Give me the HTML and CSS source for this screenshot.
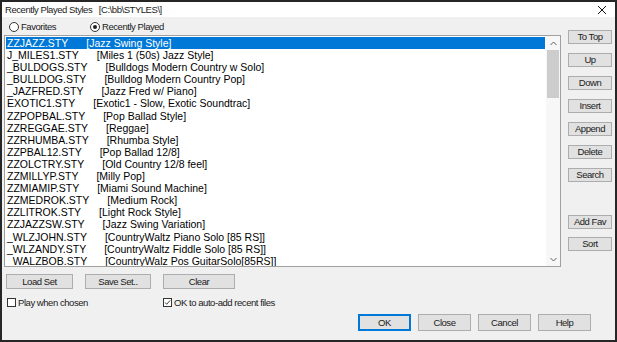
FILE: index.html
```html
<!DOCTYPE html>
<html lang="en">
<head>
  <meta charset="UTF-8">
  <title>Recently Played Styles</title>
  <link rel="stylesheet" href="styles.css">
</head>
<body>
  <div class="window">
    <div class="titlebar">
      <span class="title">Recently Played Styles&nbsp;&nbsp;&nbsp;[C:\bb\STYLES\]</span>
      <svg class="close" width="10" height="10" viewBox="0 0 10 10">
        <path d="M1 1L9 9M9 1L1 9" stroke="#111" stroke-width="1" fill="none"/>
      </svg>
    </div>

    <div class="content">
      <div class="top">
        <div class="left">
          <div class="radios">
            <label class="radio-label"><span class="radio"></span>Favorites</label>
            <label class="radio-label"><span class="radio checked"></span>Recently Played</label>
          </div>

          <div class="listbox">
            <ul class="items">
              <li class="selected"><span>ZZJAZZ.STY</span><span class="desc">[Jazz Swing Style]</span></li>
              <li><span>J_MILES1.STY</span><span class="desc">[Miles 1 (50s) Jazz Style]</span></li>
              <li><span>_BULDOGS.STY</span><span class="desc">[Bulldogs Modern Country w Solo]</span></li>
              <li><span>_BULLDOG.STY</span><span class="desc">[Bulldog Modern Country Pop]</span></li>
              <li><span>_JAZFRED.STY</span><span class="desc">[Jazz Fred w/ Piano]</span></li>
              <li><span>EXOTIC1.STY</span><span class="desc">[Exotic1 - Slow, Exotic Soundtrac]</span></li>
              <li><span>ZZPOPBAL.STY</span><span class="desc">[Pop Ballad Style]</span></li>
              <li><span>ZZREGGAE.STY</span><span class="desc">[Reggae]</span></li>
              <li><span>ZZRHUMBA.STY</span><span class="desc">[Rhumba Style]</span></li>
              <li><span>ZZPBAL12.STY</span><span class="desc">[Pop Ballad 12/8]</span></li>
              <li><span>ZZOLCTRY.STY</span><span class="desc">[Old Country 12/8 feel]</span></li>
              <li><span>ZZMILLYP.STY</span><span class="desc">[Milly Pop]</span></li>
              <li><span>ZZMIAMIP.STY</span><span class="desc">[Miami Sound Machine]</span></li>
              <li><span>ZZMEDROK.STY</span><span class="desc">[Medium Rock]</span></li>
              <li><span>ZZLITROK.STY</span><span class="desc">[Light Rock Style]</span></li>
              <li><span>ZZJAZZSW.STY</span><span class="desc">[Jazz Swing Variation]</span></li>
              <li><span>_WLZJOHN.STY</span><span class="desc">[CountryWaltz Piano Solo [85 RS]]</span></li>
              <li><span>_WLZANDY.STY</span><span class="desc">[CountryWaltz Fiddle Solo [85 RS]]</span></li>
              <li><span>_WALZBOB.STY</span><span class="desc">[CountryWalz Pos GuitarSolo[85RS]]</span></li>
            </ul>
            <div class="scrollbar">
              <span class="arrow">
                <svg width="7" height="5" viewBox="0 0 7 5"><path d="M0.5 4L3.5 1L6.5 4" stroke="#606060" fill="none"/></svg>
              </span>
              <span class="thumb"></span>
              <span class="track"></span>
              <span class="arrow">
                <svg width="7" height="5" viewBox="0 0 7 5"><path d="M0.5 1L3.5 4L6.5 1" stroke="#606060" fill="none"/></svg>
              </span>
            </div>
          </div>
        </div>

        <div class="side">
          <button class="btn">To Top</button>
          <button class="btn">Up</button>
          <button class="btn">Down</button>
          <button class="btn">Insert</button>
          <button class="btn">Append</button>
          <button class="btn">Delete</button>
          <button class="btn">Search</button>
          <button class="btn add-fav">Add Fav</button>
          <button class="btn">Sort</button>
        </div>
      </div>

      <div class="set-row">
        <button class="btn load">Load Set</button>
        <button class="btn save">Save Set..</button>
        <button class="btn clear">Clear</button>
      </div>

      <div class="check-row">
        <label class="check-label first"><span class="checkbox"></span>Play when chosen</label>
        <label class="check-label">
          <span class="checkbox">
            <svg width="9" height="9" viewBox="0 0 9 9"><path d="M1.5 4.5L3.5 6.8L7.8 1.8" stroke="#222" stroke-width="1.1" fill="none"/></svg>
          </span>OK to auto-add recent files
        </label>
      </div>

      <div class="footer">
        <button class="btn default">OK</button>
        <button class="btn">Close</button>
        <button class="btn">Cancel</button>
        <button class="btn">Help</button>
      </div>
    </div>
  </div>
</body>
</html>
```

FILE: styles.css
```css
body {
  margin: 0;
  background: #fff;
}

.window {
  width: 617px;
  height: 342px;
  box-sizing: border-box;
  border: 2px solid #262626;
  background-color: #f0f0f0;
  font-family: "Liberation Sans", Arial, sans-serif;
  font-size: 9.5px;
  letter-spacing: -0.45px;
  color: #1a1a1a;
  display: flex;
  flex-direction: column;
}

/* title bar */
.titlebar {
  height: 15px;
  background: #fff;
  display: flex;
  align-items: center;
  justify-content: space-between;
  padding: 0 8px 0 3px;
}

.close {
  display: block;
}

.content {
  display: flex;
  flex-direction: column;
}

.top {
  display: flex;
  align-items: flex-start;
}

.left {
  margin-left: 2px;
}

/* radio buttons */
.radios {
  height: 18px;
  display: flex;
  align-items: center;
  padding-left: 5px;
  padding-top: 1px;
  box-sizing: border-box;
}

.radio-label {
  display: flex;
  align-items: center;
}

.radio-label + .radio-label {
  margin-left: 34px;
}

.radio {
  width: 8px;
  height: 8px;
  border: 1px solid #333;
  border-radius: 50%;
  background: #fff;
  margin-right: 2px;
  position: relative;
}

.radio.checked::after {
  content: "";
  position: absolute;
  left: 2px;
  top: 2px;
  width: 4px;
  height: 4px;
  border-radius: 50%;
  background: #222;
}

/* list box */
.listbox {
  width: 557px;
  height: 232px;
  box-sizing: border-box;
  border: 1px solid #a0a0a0;
  background: #fff;
  display: flex;
}

.items {
  flex: 1;
  list-style: none;
  margin: 0;
  padding: 1px;
  overflow: hidden;
  font-size: 10.5px;
  letter-spacing: 0;
}

.items li {
  height: 12.1px;
  line-height: 12px;
  padding-left: 1px;
  white-space: nowrap;
  color: #000;
}

.items li.selected {
  background: #0078d7;
  color: #fff;
}

.desc {
  margin-left: 18px;
}

.scrollbar {
  width: 14px;
  background: #f7f7f7;
  display: flex;
  flex-direction: column;
}

.arrow {
  height: 14px;
  display: flex;
  align-items: center;
  justify-content: center;
}

.thumb {
  height: 48px;
  margin: 0 1px;
  background: #cdcdcd;
}

.track {
  flex: 1;
}

/* buttons */
.btn {
  font-family: inherit;
  font-size: 9.5px;
  letter-spacing: -0.45px;
  color: #1a1a1a;
  background: #e1e1e1;
  border: 1px solid #adadad;
  padding: 0;
  margin: 0;
  box-sizing: border-box;
  line-height: 1;
}

.side {
  display: flex;
  flex-direction: column;
  gap: 9px;
  margin-left: 7px;
  padding-top: 13px;
}

.side .btn {
  width: 44px;
  height: 14px;
}

.side .add-fav {
  margin-top: 24px;
}

.side .add-fav + .btn {
  margin-top: -1px;
}

.set-row {
  display: flex;
  gap: 12px;
  margin-top: 7px;
  padding-left: 4px;
}

.set-row .btn {
  height: 15px;
  width: 66px;
}

.set-row .load {
  width: 67px;
}

.set-row .clear {
  width: 72px;
}

/* checkboxes */
.check-row {
  display: flex;
  align-items: center;
  height: 10px;
  margin-top: 8px;
  padding-left: 5px;
}

.check-label {
  display: flex;
  align-items: center;
}

.check-label.first {
  width: 156px;
}

.checkbox {
  width: 9px;
  height: 9px;
  box-sizing: border-box;
  border: 1px solid #333;
  background: #fff;
  margin-right: 2px;
  display: flex;
  align-items: center;
  justify-content: center;
}

.checkbox svg {
  display: block;
}

/* dialog buttons */
.footer {
  display: flex;
  justify-content: flex-end;
  gap: 7px;
  margin-top: 7px;
  padding-right: 24px;
}

.footer .btn {
  width: 53px;
  height: 17px;
}

.footer .default {
  border-color: #0078d7;
  box-shadow: inset 0 0 0 1px #0078d7;
}
```
